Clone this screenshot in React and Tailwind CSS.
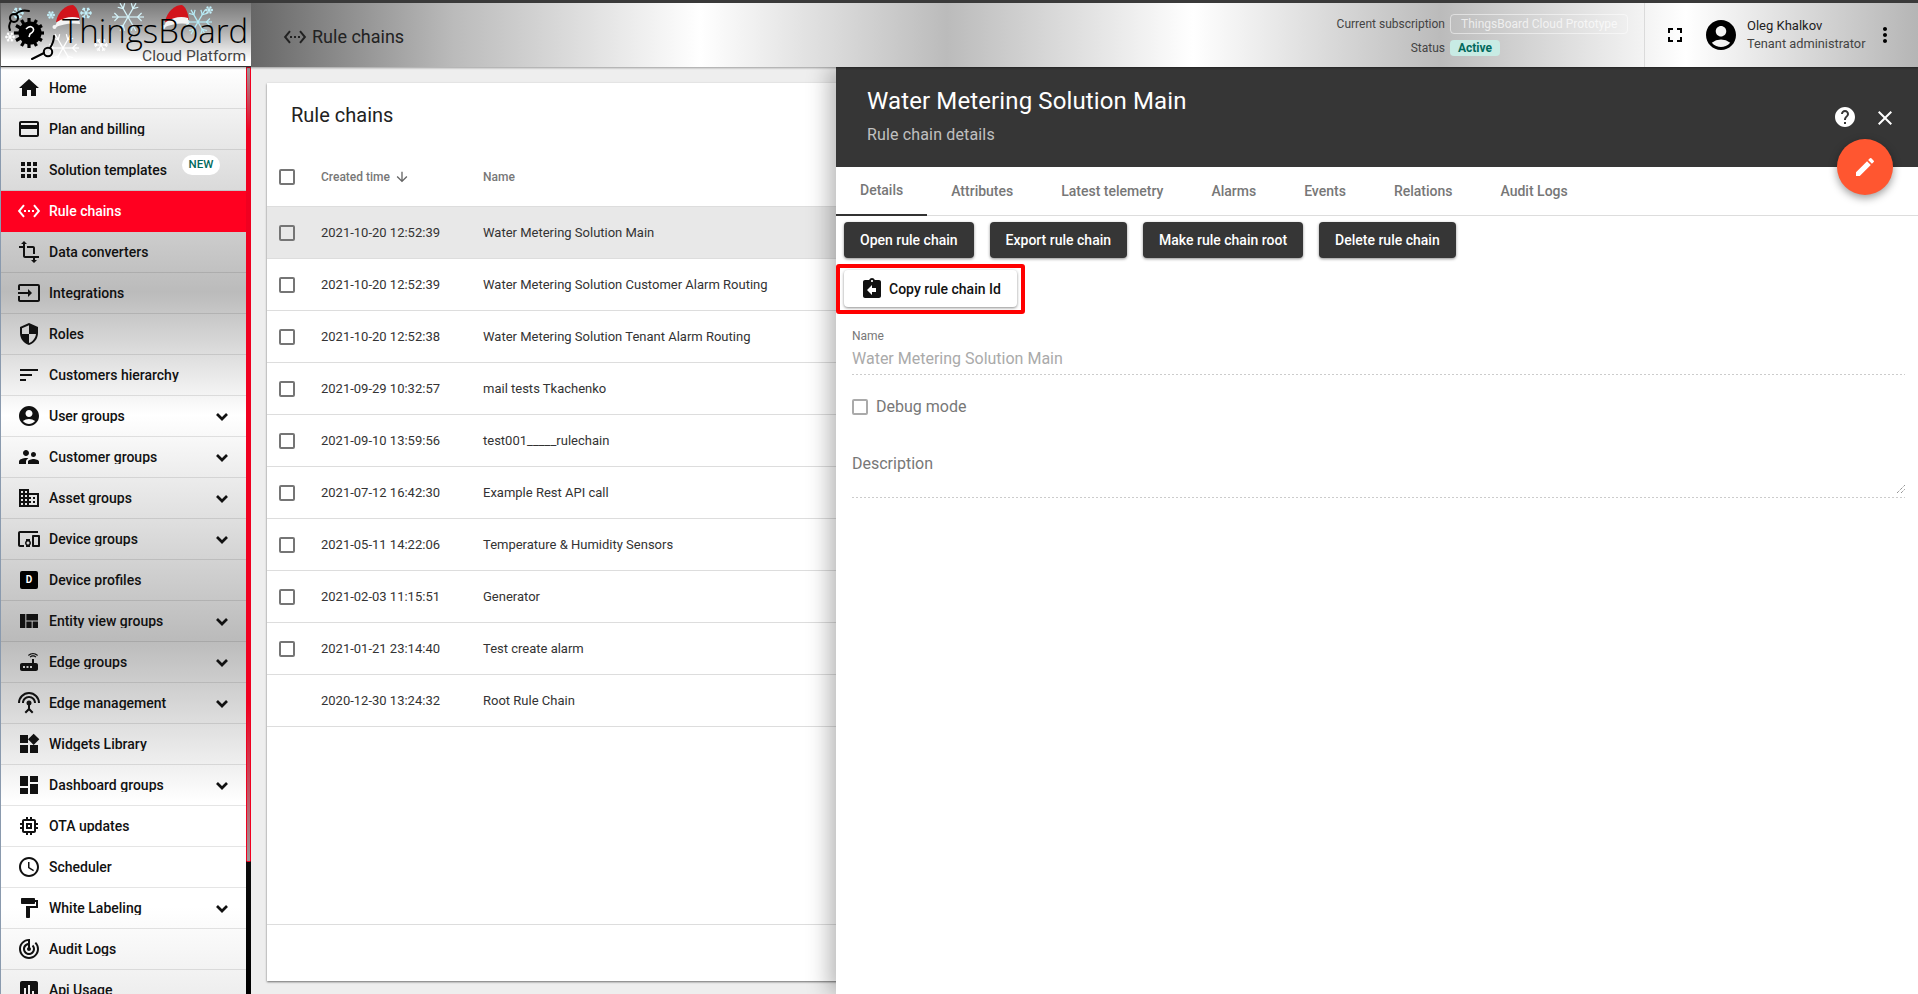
import React from "react";
import {
  MdHome, MdCreditCard, MdApps, MdSettingsEthernet, MdTransform, MdInput, MdSecurity, MdSort,
  MdAccountCircle, MdSupervisorAccount, MdDomain, MdDevicesOther, MdViewQuilt, MdRouter,
  MdSettingsInputAntenna, MdWidgets, MdDashboard, MdMemory, MdSchedule, MdFormatPaint, MdTrackChanges,
  MdInsertChart, MdFullscreen, MdMoreVert, MdHelp, MdClose, MdEdit,
  MdAssignmentReturn, MdArrowDownward,
} from "react-icons/md";

function DBox() {
  return (
    <span className="flex h-[18px] w-[18px] items-center justify-center rounded-[2px] bg-black text-[10px] font-bold text-white">D</span>
  );
}

function Chevron() {
  return (
    <svg width="24" height="24" viewBox="0 0 24 24" className="shrink-0" fill="none">
      <polyline points="7,10 12,15 17,10" stroke="#111" strokeWidth="2.7" />
    </svg>
  );
}

const items = [
  { label: "Home", icon: MdHome },
  { label: "Plan and billing", icon: MdCreditCard },
  { label: "Solution templates", icon: MdApps, badge: true },
  { label: "Rule chains", icon: MdSettingsEthernet, active: true },
  { label: "Data converters", icon: MdTransform },
  { label: "Integrations", icon: MdInput },
  { label: "Roles", icon: MdSecurity },
  { label: "Customers hierarchy", icon: MdSort },
  { label: "User groups", icon: MdAccountCircle, more: true },
  { label: "Customer groups", icon: MdSupervisorAccount, more: true },
  { label: "Asset groups", icon: MdDomain, more: true },
  { label: "Device groups", icon: MdDevicesOther, more: true },
  { label: "Device profiles", icon: DBox },
  { label: "Entity view groups", icon: MdViewQuilt, more: true },
  { label: "Edge groups", icon: MdRouter, more: true },
  { label: "Edge management", icon: MdSettingsInputAntenna, more: true },
  { label: "Widgets Library", icon: MdWidgets },
  { label: "Dashboard groups", icon: MdDashboard, more: true },
  { label: "OTA updates", icon: MdMemory },
  { label: "Scheduler", icon: MdSchedule },
  { label: "White Labeling", icon: MdFormatPaint, more: true },
  { label: "Audit Logs", icon: MdTrackChanges },
  { label: "Api Usage", icon: MdInsertChart },
];

const rows = [
  ["2021-10-20 12:52:39", "Water Metering Solution Main"],
  ["2021-10-20 12:52:39", "Water Metering Solution Customer Alarm Routing"],
  ["2021-10-20 12:52:38", "Water Metering Solution Tenant Alarm Routing"],
  ["2021-09-29 10:32:57", "mail tests Tkachenko"],
  ["2021-09-10 13:59:56", "test001_____rulechain"],
  ["2021-07-12 16:42:30", "Example Rest API call"],
  ["2021-05-11 14:22:06", "Temperature & Humidity Sensors"],
  ["2021-02-03 11:15:51", "Generator"],
  ["2021-01-21 23:14:40", "Test create alarm"],
  ["2020-12-30 13:24:32", "Root Rule Chain"],
];

const tabs = ["Details", "Attributes", "Latest telemetry", "Alarms", "Events", "Relations", "Audit Logs"];
const actions = ["Open rule chain", "Export rule chain", "Make rule chain root", "Delete rule chain"];

function Flake({ x, y, r, color = "#c4f1fb" }) {
  const spokes = [0, 60, 120];
  return (
    <g stroke={color} strokeWidth="1.2" transform={`translate(${x} ${y})`}>
      {spokes.map((a) => (
        <g key={a} transform={`rotate(${a})`}>
          <line x1={-r} y1="0" x2={r} y2="0" />
          <line x1={r * 0.6} y1="0" x2={r * 0.85} y2={r * 0.25} />
          <line x1={r * 0.6} y1="0" x2={r * 0.85} y2={-r * 0.25} />
          <line x1={-r * 0.6} y1="0" x2={-r * 0.85} y2={r * 0.25} />
          <line x1={-r * 0.6} y1="0" x2={-r * 0.85} y2={-r * 0.25} />
        </g>
      ))}
    </g>
  );
}

function Hat({ x, y }) {
  return (
    <g transform={`translate(${x} ${y})`}>
      <path d="M2 17 C4 6 12 0 19 0 C23 2 25 8 26 15 Z" fill="#d2141c" />
      <path d="M0 23 L3 17 Q14 10 25 13 L26 19 Q12 17 0 23 Z" fill="#f4f4f4" />
      <circle cx="0.5" cy="22" r="2" fill="#f4f4f4" />
    </g>
  );
}

function LogoArt() {
  const spikes = [0, 30, 60, 90, 120, 150];
  return (
    <svg width="249" height="64" viewBox="0 0 249 64" className="absolute left-0 top-0">
      <Flake x={85} y={10} r={6} />
      <Flake x={127} y={14} r={16} color="#d5f4fa" />
      <Flake x={62} y={45} r={16} color="#ffffff" />
      <Flake x={197} y={19} r={14} color="#b6ecf7" />
      <Flake x={17} y={10} r={6} />
      <Flake x={9} y={34} r={5} color="#ffffff" />
      <Flake x={50} y={12} r={4} />
      <Flake x={100} y={42} r={7} color="#ffffff" />
      <Flake x={208} y={7} r={4} />
      <g transform="translate(0 -3)">
        <g stroke="#000" strokeWidth="3.2">
          {spikes.map((a) => (
            <line key={a} x1="13" y1="33" x2="43" y2="33" transform={`rotate(${a} 28 33)`} />
          ))}
        </g>
        <circle cx="29" cy="33" r="11.5" fill="#000" />
        <path d="M25 29 q4 -4 7 -1 q2 3 -3 6 l-1 3" stroke="#fff" strokeWidth="1.6" fill="none" />
        <g stroke="#000" strokeWidth="2" fill="none" strokeLinecap="round">
          <circle cx="13" cy="18" r="4" />
          <path d="M10 21 Q7 26 9 30 M15 14 Q20 9 28 11" />
          <circle cx="47" cy="52" r="4.2" />
          <path d="M43 53 L31 59 M49 48 Q53 42 53 36" />
        </g>
      </g>
      <Hat x={53} y={2} />
      <Hat x={162} y={2} />
    </svg>
  );
}

function Check() {
  return <span className="block h-4 w-4 shrink-0 rounded-[2px] border-2 border-[#757575]" />;
}

function SideRow({ item }) {
  const Icon = item.icon;
  return (
    <div
      className={`relative flex h-[41px] shrink-0 items-center gap-2 border-b pl-4 pr-3 text-[14px] font-medium leading-none ${
        item.active ? "border-[#ff0020] bg-[#ff0020] text-white" : "border-black/10 text-[#111]"
      }`}
    >
      <span className="flex h-6 w-6 shrink-0 items-center justify-center">
        <Icon size={24} />
      </span>
      <span className="flex-1 truncate">{item.label}</span>
      {item.more && <Chevron />}
      {item.badge && (
        <span className="absolute left-[181px] top-[5px] flex h-5 w-[38px] items-center justify-center rounded-[10px] bg-white text-[11.5px] font-medium text-[#00695c]">
          NEW
        </span>
      )}
    </div>
  );
}

const dotted = "bg-[linear-gradient(to_right,#999_1px,transparent_1px)] bg-[length:4px_1px] bg-bottom bg-repeat-x";

export default function App() {
  return (
    <div className="flex h-screen w-full flex-col overflow-hidden bg-[#eee] font-['Roboto',sans-serif]">
      <header className="relative z-10 flex h-[67px] shrink-0 items-stretch border-t-[3px] border-[#3a3a3a] bg-[linear-gradient(to_right,#666_250px,#bbb_454px,#fff_700px,#bbb_947px,#fff_1193px,#bbb_1440px,#fff_1686px,#b5b5b5_1918px)] shadow-[0_1px_2px_rgba(0,0,0,0.35)]">
        <div className="relative ml-px w-[250px] shrink-0 overflow-hidden border-b border-[#333] bg-[linear-gradient(to_bottom,#7a7a7a,#a8a8a8_40%,#fff_90%)]">
          <LogoArt />
          <span className="absolute left-[61px] top-[11px] font-['Open_Sans',sans-serif] text-[33px] font-light leading-none text-black">ThingsBoard</span>
          <span className="absolute right-[5px] top-[46px] text-[15.5px] leading-none text-[#444]">Cloud Platform</span>
        </div>
        <div className="ml-8 flex items-center gap-[5px] pt-1 text-[#222]">
          <MdSettingsEthernet size={24} />
          <span className="text-[18px] leading-none">Rule chains</span>
        </div>
        <div className="ml-auto flex flex-col items-end justify-center gap-[5px] pr-4 text-[12px] text-[#444]">
          <div className="flex items-center gap-[5px] pt-px">
            <span>Current subscription</span>
            <span className="flex h-5 w-[178px] items-center truncate rounded-[4px] border border-white/50 pl-[10px] text-white/70">ThingsBoard Cloud Prototype</span>
          </div>
          <div className="flex w-full items-center justify-end gap-[5px]">
            <span>Status</span>
            <span className="mr-[128px] flex h-4 w-[50px] items-center justify-center rounded-[4px] bg-[#c8ebe4] font-bold text-[#00695c]">Active</span>
          </div>
        </div>
        <div className="flex w-[274px] shrink-0 items-center border-l border-black/10 pl-[18px]">
          <MdFullscreen size={24} className="shrink-0 text-black" />
          <MdAccountCircle size={36} className="ml-4 shrink-0 text-black" />
          <div className="ml-2 flex flex-1 flex-col gap-1 text-[13px] leading-[14px]">
            <span className="text-[#222]">Oleg Khalkov</span>
            <span className="whitespace-nowrap text-[12.8px] text-[#444]">Tenant administrator</span>
          </div>
          <MdMoreVert size={24} className="mr-[21px] shrink-0 text-black" />
        </div>
      </header>

      <div className="flex min-h-0 flex-1">
        <aside className="flex w-[251px] shrink-0 overflow-hidden">
          <nav className="flex w-[246px] shrink-0 flex-col overflow-hidden border-l border-[#8a9aae] bg-[linear-gradient(to_bottom,#fff_0px,#bbb_225px,#fff_348px,#bbb_572px,#fff_735px,#fff_840px,#eee_927px)] pt-px">
            {items.map((item) => (
              <SideRow key={item.label} item={item} />
            ))}
          </nav>
          <div className="flex w-[5px] shrink-0 flex-col bg-[linear-gradient(to_bottom,#555,#000)]">
            <div className="h-[795px] shrink-0 rounded-[1px] border border-[#f00020] bg-[linear-gradient(to_bottom,#999,#f00020_8%,#f00020_80%,#999)]" />
          </div>
        </aside>

        <main className="relative flex min-w-0 flex-1 flex-col pb-[13px] pl-4 pt-4">
          <section className="flex min-h-0 flex-1 flex-col bg-white shadow-[0_1px_2px_rgba(0,0,0,0.55)]">
            <h1 className="flex h-[64px] shrink-0 items-center pl-6 text-[20px] font-normal leading-none text-[#222]">Rule chains</h1>
            <div className="flex h-[60px] shrink-0 items-center border-b border-[#ddd] pl-3 text-[12px] font-medium text-[#777]">
              <Check />
              <span className="ml-[26px] flex w-[162px] items-center gap-1">
                Created time <MdArrowDownward size={16} className="text-[#666]" />
              </span>
              <span>Name</span>
            </div>
            <div className="flex-1">
              {rows.map(([t, n], i) => (
                <div key={t + n} className={`flex h-[52px] items-center border-b border-[#ddd] pl-3 text-[13px] text-[#333] ${i === 0 ? "bg-[#e8e8e8]" : ""}`}>
                  {i < 9 ? <Check /> : <span className="w-4" />}
                  <span className="ml-[26px] w-[162px]">{t}</span>
                  <span>{n}</span>
                </div>
              ))}
            </div>
            <div className="h-[57px] shrink-0 border-t border-[#ddd]" />
          </section>

          <aside className="absolute bottom-0 right-0 top-0 flex w-[1082px] flex-col bg-white shadow-[-6px_0_22px_rgba(0,0,0,0.3)]">
            <div className="relative flex h-[100px] shrink-0 flex-col bg-[#363636] pl-[31px] pt-[18px] text-white">
              <h2 className="text-[24px] font-normal leading-[32px] tracking-[0.12px]">Water Metering Solution Main</h2>
              <p className="mt-2 text-[16px] leading-5 tracking-[0.15px] text-white/70">Rule chain details</p>
              <MdHelp size={24} className="absolute right-[61px] top-[38px] text-white" />
              <MdClose size={24} className="absolute right-[21px] top-[39px] text-white" />
              <button className="absolute right-[25px] top-[72px] z-10 flex h-14 w-14 items-center justify-center rounded-full bg-[#ff5630] shadow-[0_3px_8px_rgba(0,0,0,0.4)]">
                <MdEdit size={24} className="text-white" />
              </button>
            </div>

            <div className="flex h-[49px] shrink-0 border-b border-[#ddd] text-[14px] font-medium text-[#777]">
              {tabs.map((tab, i) => (
                <span key={tab} className={`flex items-center px-6 ${i === 0 ? "-mb-px border-b-2 border-[#333]" : ""}`}>{tab}</span>
              ))}
            </div>

            <div className="flex gap-4 pl-2 pt-[6px]">
              {actions.map((a) => (
                <button key={a} className="h-9 rounded-[4px] bg-[#363636] px-4 text-[14px] font-medium text-white shadow-[0_1px_3px_rgba(0,0,0,0.45)]">{a}</button>
              ))}
            </div>

            <div className="relative ml-2 mt-3 w-fit">
              <button className="flex h-[37px] items-center gap-[5px] rounded-[4px] bg-white pl-4 pr-4 pt-px text-[14px] font-medium text-[#111] shadow-[0_1px_3px_rgba(0,0,0,0.45)]">
                <MdAssignmentReturn size={24} className="text-[#111]" />
                Copy rule chain Id
              </button>
              <span className="absolute -inset-x-[8px] -bottom-[7px] -top-[6px] rounded-[3px] border-4 border-[#ff0000]" />
            </div>

            <div className="flex flex-col pl-4 pr-[13px] pt-[22px]">
              <label className="text-[12px] leading-[14px] text-[#777]">Name</label>
              <div className={`h-[32px] pt-[6px] text-[16px] leading-5 text-[#aaa] ${dotted}`}>Water Metering Solution Main</div>
              <div className="mt-6 flex items-center gap-2 text-[16px] leading-none text-[#777]">
                <span className="block h-4 w-4 rounded-[2px] border-2 border-[#aaa]" />
                Debug mode
              </div>
              <div className={`relative mt-9 h-[47px] pt-px text-[16px] leading-6 text-[#777] ${dotted}`}>
                Description
                <svg width="8" height="8" viewBox="0 0 8 8" className="absolute bottom-[5px] right-0">
                  <path d="M0 8 L8 0 M4 8 L8 4" stroke="#666" strokeWidth="1" strokeDasharray="1 1" />
                </svg>
              </div>
            </div>
          </aside>
        </main>
      </div>
    </div>
  );
}
